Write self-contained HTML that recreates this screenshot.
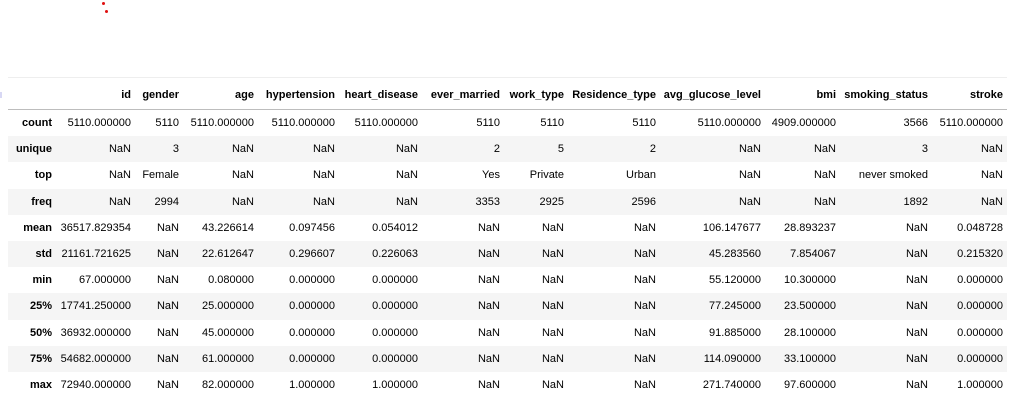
<!DOCTYPE html>
<html><head><style>
body{margin:0;width:1016px;height:416px;background:#fff;position:relative;overflow:hidden;font-family:"Liberation Sans",Arial,sans-serif;font-size:11px;color:#000}
.d{position:absolute;width:3px;height:3px;border-radius:50%;background:#e01010}
table{position:absolute;left:8px;top:77px;border-collapse:collapse;table-layout:fixed;width:999px;border-top:1px solid #eee}
td,th{text-align:right;padding:0 4px 0 0;height:26.2px;white-space:nowrap;overflow:visible}
thead th{height:32px;padding-top:3px;box-sizing:border-box;border-bottom:1px solid #bdbdbd;font-weight:bold}
tbody tr:nth-child(even){background:#f5f5f5}
tbody th{font-weight:bold}
</style></head><body>
<div class="d" style="left:102px;top:2px"></div>
<div class="d" style="left:105px;top:10px"></div>
<div style="position:absolute;left:0;top:92px;width:2px;height:6px;background:#d8d8f4"></div>
<table>
<colgroup><col style="width:48px"><col style="width:79px"><col style="width:48px"><col style="width:75px"><col style="width:81px"><col style="width:83px"><col style="width:82px"><col style="width:64px"><col style="width:92px"><col style="width:105px"><col style="width:75px"><col style="width:92px"><col style="width:75px"></colgroup>
<thead><tr><th></th><th>id</th><th>gender</th><th>age</th><th>hypertension</th><th>heart_disease</th><th>ever_married</th><th>work_type</th><th>Residence_type</th><th>avg_glucose_level</th><th>bmi</th><th>smoking_status</th><th>stroke</th></tr></thead>
<tbody>
<tr><th>count</th><td>5110.000000</td><td>5110</td><td>5110.000000</td><td>5110.000000</td><td>5110.000000</td><td>5110</td><td>5110</td><td>5110</td><td>5110.000000</td><td>4909.000000</td><td>3566</td><td>5110.000000</td></tr>
<tr><th>unique</th><td>NaN</td><td>3</td><td>NaN</td><td>NaN</td><td>NaN</td><td>2</td><td>5</td><td>2</td><td>NaN</td><td>NaN</td><td>3</td><td>NaN</td></tr>
<tr><th>top</th><td>NaN</td><td>Female</td><td>NaN</td><td>NaN</td><td>NaN</td><td>Yes</td><td>Private</td><td>Urban</td><td>NaN</td><td>NaN</td><td>never smoked</td><td>NaN</td></tr>
<tr><th>freq</th><td>NaN</td><td>2994</td><td>NaN</td><td>NaN</td><td>NaN</td><td>3353</td><td>2925</td><td>2596</td><td>NaN</td><td>NaN</td><td>1892</td><td>NaN</td></tr>
<tr><th>mean</th><td>36517.829354</td><td>NaN</td><td>43.226614</td><td>0.097456</td><td>0.054012</td><td>NaN</td><td>NaN</td><td>NaN</td><td>106.147677</td><td>28.893237</td><td>NaN</td><td>0.048728</td></tr>
<tr><th>std</th><td>21161.721625</td><td>NaN</td><td>22.612647</td><td>0.296607</td><td>0.226063</td><td>NaN</td><td>NaN</td><td>NaN</td><td>45.283560</td><td>7.854067</td><td>NaN</td><td>0.215320</td></tr>
<tr><th>min</th><td>67.000000</td><td>NaN</td><td>0.080000</td><td>0.000000</td><td>0.000000</td><td>NaN</td><td>NaN</td><td>NaN</td><td>55.120000</td><td>10.300000</td><td>NaN</td><td>0.000000</td></tr>
<tr><th>25%</th><td>17741.250000</td><td>NaN</td><td>25.000000</td><td>0.000000</td><td>0.000000</td><td>NaN</td><td>NaN</td><td>NaN</td><td>77.245000</td><td>23.500000</td><td>NaN</td><td>0.000000</td></tr>
<tr><th>50%</th><td>36932.000000</td><td>NaN</td><td>45.000000</td><td>0.000000</td><td>0.000000</td><td>NaN</td><td>NaN</td><td>NaN</td><td>91.885000</td><td>28.100000</td><td>NaN</td><td>0.000000</td></tr>
<tr><th>75%</th><td>54682.000000</td><td>NaN</td><td>61.000000</td><td>0.000000</td><td>0.000000</td><td>NaN</td><td>NaN</td><td>NaN</td><td>114.090000</td><td>33.100000</td><td>NaN</td><td>0.000000</td></tr>
<tr><th>max</th><td>72940.000000</td><td>NaN</td><td>82.000000</td><td>1.000000</td><td>1.000000</td><td>NaN</td><td>NaN</td><td>NaN</td><td>271.740000</td><td>97.600000</td><td>NaN</td><td>1.000000</td></tr>
</tbody></table>
</body></html>
